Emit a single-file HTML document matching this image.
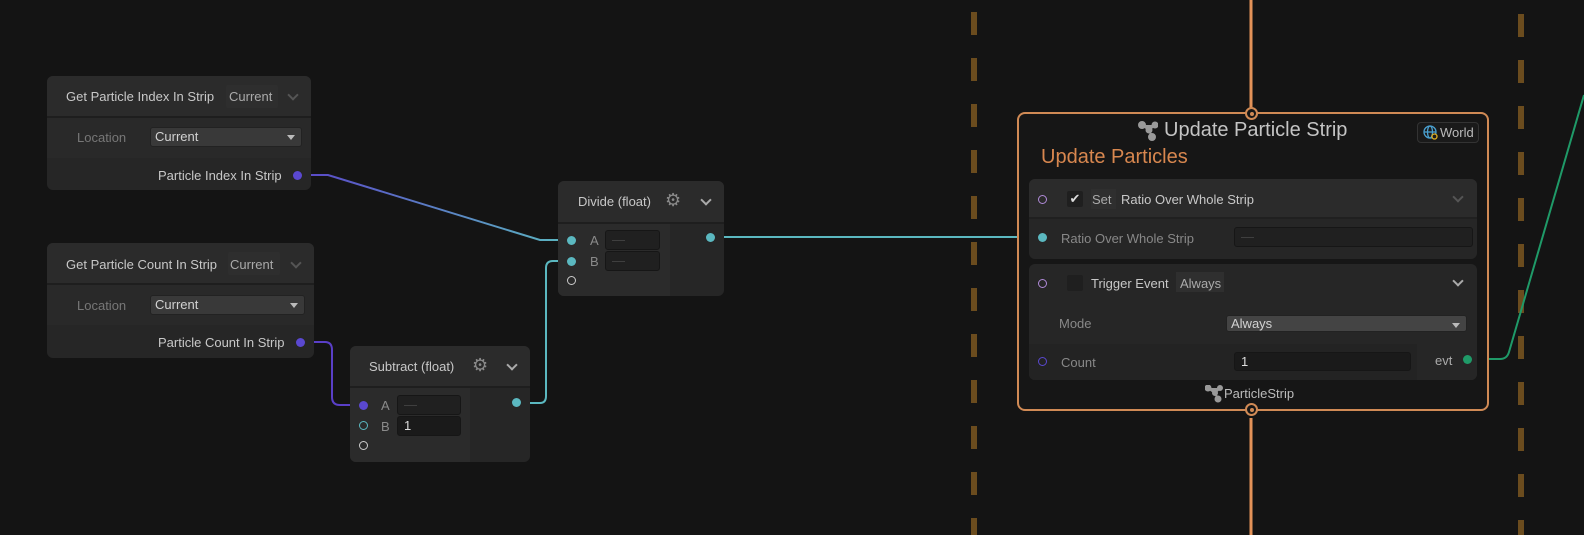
<!DOCTYPE html>
<html><head><meta charset="utf-8"><style>
*{box-sizing:border-box;margin:0;padding:0}
body{width:1584px;height:535px;background:#141414;position:relative;overflow:hidden;font-family:"Liberation Sans",sans-serif;color:#c8c8c8;font-size:13px}
.a{position:absolute}
.node{position:absolute;background:#262626;border-radius:6px;overflow:hidden}
.hdr{position:absolute;left:0;right:0;top:0;background:#2b2b2b;border-bottom:2px solid #1e1e1e}
.t{position:absolute;white-space:nowrap}
.dd{position:absolute;background:#393939;border:1px solid #222;border-radius:3px;color:#d2d2d2;padding-left:4px;line-height:17px}
.dd:after{content:"";position:absolute;right:6px;top:7px;border:4px solid transparent;border-top:5px solid #bbb;border-bottom:0}
.fld{position:absolute;background:#202020;border:1px solid #161616;border-radius:3px;color:#ddd;padding-left:6px;line-height:18px}
.dot{position:absolute;width:9px;height:9px;border-radius:50%}
.ring{position:absolute;width:9px;height:9px;border-radius:50%;border:1.5px solid #ccc}
.chev{position:absolute;width:8px;height:8px;border-right:2px solid #aaa;border-bottom:2px solid #aaa;transform:rotate(45deg)}
.gray{color:#8a8a8a}
.gear{position:absolute;color:#8a8a8a;font-size:18px;font-family:"DejaVu Sans",sans-serif}
</style></head><body>
<svg class="a" style="left:0;top:0" width="1584" height="535">
<defs>
<pattern id="p" x="0" y="12" width="10" height="46" patternUnits="userSpaceOnUse"><rect width="10" height="23" fill="#6b4c1e"/></pattern>
<pattern id="p2" x="0" y="14" width="10" height="46" patternUnits="userSpaceOnUse"><rect width="10" height="23" fill="#6b4c1e"/></pattern>
<linearGradient id="g1" x1="0" x2="1"><stop offset="0" stop-color="#5a48c8"/><stop offset="1" stop-color="#5bb8c0"/></linearGradient>
</defs>
<rect x="971" y="0" width="6" height="535" fill="url(#p)"/>
<rect x="1518" y="0" width="6" height="535" fill="url(#p2)"/>
<g fill="none" stroke-width="2">
<path d="M1251 0V110M1251 418V535" stroke="#e39258" stroke-width="3"/>
<path d="M304 175H328L540 240H571" stroke="url(#g1)"/>
<path d="M304 342H325Q332 342 332 350V397Q332 405 340 405H364" stroke="#5a3fc8"/>
<path d="M520 403H540Q546 403 546 396V268Q546 261 553 261H571" stroke="#5bb8c0"/>
<path d="M712 237H1042" stroke="#5bb8c0"/>
<path d="M1470 359H1500Q1507 359 1509 352L1584 95" stroke="#1f9a68"/>
</g>
</svg>

<!-- node1 -->
<div class="node" style="left:47px;top:76px;width:264px;height:114px">
<div class="hdr" style="height:42px"></div>
<div class="a" style="left:0;right:0;top:42px;height:40px;background:#292929"></div>
<div class="a" style="left:179px;top:9px;height:23px;width:52px;background:#2e2e2e;border-radius:2px"></div>
<div class="t" style="left:19px;top:13px">Get Particle Index In Strip</div>
<div class="t" style="left:182px;top:13px;color:#aaa">Current</div>
<div class="chev" style="left:242px;top:15px;border-color:#555"></div>
<div class="t" style="left:30px;top:54px;color:#777">Location</div>
<div class="dd" style="left:103px;top:51px;width:152px;height:20px">Current</div>
<div class="t" style="left:111px;top:92px">Particle Index In Strip</div>
<div class="dot" style="left:246px;top:95px;background:#5a48d0"></div>
</div>
<!-- node2 -->
<div class="node" style="left:47px;top:243px;width:267px;height:115px">
<div class="hdr" style="height:42px"></div>
<div class="a" style="left:0;right:0;top:42px;height:40px;background:#292929"></div>
<div class="a" style="left:181px;top:9px;height:23px;width:52px;background:#2e2e2e;border-radius:2px"></div>
<div class="t" style="left:19px;top:14px">Get Particle Count In Strip</div>
<div class="t" style="left:183px;top:14px;color:#aaa">Current</div>
<div class="chev" style="left:245px;top:16px;border-color:#555"></div>
<div class="t" style="left:30px;top:55px;color:#777">Location</div>
<div class="dd" style="left:103px;top:52px;width:155px;height:20px">Current</div>
<div class="t" style="left:111px;top:92px">Particle Count In Strip</div>
<div class="dot" style="left:249px;top:95px;background:#5a48d0"></div>
</div>
<!-- subtract -->
<div class="node" style="left:350px;top:346px;width:180px;height:116px">
<div class="hdr" style="height:42px"></div>
<div class="a" style="left:0;width:120px;top:42px;bottom:0;background:#2b2b2b"></div>
<div class="t" style="left:19px;top:13px">Subtract (float)</div>
<div class="gear" style="left:122px;top:9px">⚙</div>
<div class="chev" style="left:158px;top:15px"></div>
<div class="dot" style="left:9px;top:55px;background:#5a48d0"></div>
<div class="t gray" style="left:31px;top:52px">A</div>
<div class="fld" style="left:47px;top:49px;width:64px;height:20px;color:#444">—</div>
<div class="ring" style="left:9px;top:75px;border-color:#5bb8c0"></div>
<div class="t gray" style="left:31px;top:73px">B</div>
<div class="fld" style="left:47px;top:70px;width:64px;height:20px;background:#1a1a1a">1</div>
<div class="ring" style="left:9px;top:95px"></div>
<div class="dot" style="left:162px;top:52px;background:#5bb8c0"></div>
</div>
<!-- divide -->
<div class="node" style="left:558px;top:181px;width:166px;height:115px">
<div class="hdr" style="height:43px"></div>
<div class="a" style="left:0;width:112px;top:43px;bottom:0;background:#2b2b2b"></div>
<div class="t" style="left:20px;top:13px">Divide (float)</div>
<div class="gear" style="left:107px;top:9px">⚙</div>
<div class="chev" style="left:144px;top:15px"></div>
<div class="dot" style="left:9px;top:55px;background:#5bb8c0"></div>
<div class="t gray" style="left:32px;top:52px">A</div>
<div class="fld" style="left:47px;top:49px;width:55px;height:20px;color:#444">—</div>
<div class="dot" style="left:9px;top:76px;background:#5bb8c0"></div>
<div class="t gray" style="left:32px;top:73px">B</div>
<div class="fld" style="left:47px;top:70px;width:55px;height:20px;color:#444">—</div>
<div class="ring" style="left:9px;top:95px"></div>
<div class="dot" style="left:148px;top:52px;background:#5bb8c0"></div>
</div>
<!-- big context -->
<div class="a" style="left:1017px;top:112px;width:472px;height:299px;border:2px solid #d08a55;border-radius:8px;background:#161616"></div>
<div class="a" style="left:1245px;top:107px;width:13px;height:13px;border-radius:50%;border:2px solid #d08a55;background:#161616"><div class="a" style="left:2.5px;top:2.5px;width:4px;height:4px;border-radius:50%;background:#d08a55"></div></div>
<div class="a" style="left:1245px;top:403px;width:13px;height:13px;border-radius:50%;border:2px solid #d08a55;background:#161616"><div class="a" style="left:2.5px;top:2.5px;width:4px;height:4px;border-radius:50%;background:#d08a55"></div></div>
<svg class="a" style="left:1138px;top:121px" width="20" height="20"><g fill="#999" stroke="#999" stroke-width="2"><path d="M4 4L11 9L17 4M11 9L14 16"/><circle cx="4" cy="4" r="3"/><circle cx="17" cy="4" r="2.5"/><circle cx="11" cy="9" r="2.5"/><circle cx="14" cy="16" r="3"/></g></svg>
<div class="t" style="left:1164px;top:119px;font-size:20px;color:#c4c4c4">Update Particle Strip</div>
<div class="a" style="left:1417px;top:122px;width:62px;height:21px;border:1px solid #333;border-radius:4px;background:#1a1a1a"></div>
<svg class="a" style="left:1423px;top:125px" width="16" height="16"><g fill="none" stroke="#4aa0d0" stroke-width="1.3"><circle cx="7" cy="7" r="6"/><ellipse cx="7" cy="7" rx="2.5" ry="6"/><path d="M1 7H13"/></g><circle cx="11.5" cy="11.5" r="2.5" fill="#1a1a1a" stroke="#e0b020" stroke-width="1.3"/></svg>
<div class="t" style="left:1440px;top:125px;color:#bbb">World</div>
<div class="t" style="left:1041px;top:146px;font-size:20px;color:#d8874f">Update Particles</div>
<!-- block1 -->
<div class="a" style="left:1029px;top:179px;width:448px;height:80px;background:#262626;border-radius:6px;overflow:hidden">
<div class="a" style="left:0;right:0;top:0;height:40px;background:#2b2b2b;border-bottom:2px solid #202020"></div>
<div class="ring" style="left:9px;top:16px;border-color:#b08ad8"></div>
<div class="a" style="left:38px;top:12px;width:16px;height:16px;background:#1f1f1f;border-radius:2px;color:#ddd;font-size:13px;text-align:center;line-height:16px">✔</div>
<div class="a" style="left:62px;top:10px;width:25px;height:20px;background:#2f2f2f"></div>
<div class="t" style="left:63px;top:13px;color:#aaa">Set</div>
<div class="t" style="left:92px;top:13px">Ratio Over Whole Strip</div>
<div class="chev" style="left:425px;top:14px;border-color:#555"></div>
<div class="dot" style="left:9px;top:54px;background:#5bb8c0"></div>
<div class="t" style="left:32px;top:52px;color:#888">Ratio Over Whole Strip</div>
<div class="fld" style="left:205px;top:48px;width:239px;height:20px;color:#444">—</div>
</div>
<!-- block2 -->
<div class="a" style="left:1029px;top:264px;width:448px;height:116px;background:#262626;border-radius:6px;overflow:hidden">
<div class="ring" style="left:9px;top:15px;border-color:#b08ad8"></div>
<div class="a" style="left:38px;top:11px;width:16px;height:16px;background:#1f1f1f;border-radius:2px"></div>
<div class="t" style="left:62px;top:12px">Trigger Event</div>
<div class="a" style="left:147px;top:8px;width:48px;height:20px;background:#2f2f2f"></div>
<div class="t" style="left:151px;top:12px;color:#aaa">Always</div>
<div class="chev" style="left:425px;top:13px"></div>
<div class="t" style="left:30px;top:52px;color:#888">Mode</div>
<div class="dd" style="left:197px;top:51px;width:241px;height:17px;line-height:15px;background:#444">Always</div>
<div class="a" style="left:0;right:0;top:80px;bottom:0;background:#232323"></div>
<div class="ring" style="left:9px;top:93px;border-color:#5a48d0"></div>
<div class="t" style="left:32px;top:91px;color:#888">Count</div>
<div class="fld" style="left:205px;top:88px;width:177px;height:19px;background:#1a1a1a">1</div>
<div class="a" style="left:388px;top:80px;right:0;bottom:0;background:#262626"></div>
<div class="t" style="left:406px;top:89px;color:#aaa">evt</div>
<div class="dot" style="left:434px;top:91px;background:#1f9a68"></div>
</div>
<svg class="a" style="left:1205px;top:385px" width="18" height="18"><g fill="#999" stroke="#999" stroke-width="2"><path d="M3 3L10 8L15 3M10 8L13 14"/><circle cx="3" cy="3" r="2.5"/><circle cx="15" cy="3" r="2"/><circle cx="10" cy="8" r="2"/><circle cx="13" cy="14" r="2.5"/></g></svg>
<div class="t" style="left:1224px;top:386px;color:#bbb">ParticleStrip</div>
</body></html>
